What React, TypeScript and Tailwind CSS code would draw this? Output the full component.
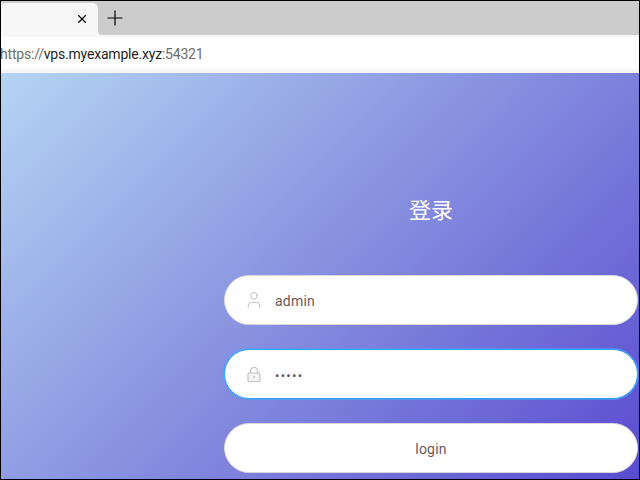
import { X, User } from 'lucide-react';

function Pill({ focused, children }: { focused?: boolean; children: React.ReactNode }) {
  return (
    <div
      className={`h-[50px] rounded-[25px] bg-white flex items-center border ${
        focused ? 'border-[#2f9fff] shadow-[0_0_0_1px_#40a9ff99]' : 'border-[#d9d9d9]'
      }`}
    >
      {children}
    </div>
  );
}

export default function App() {
  return (
    <div
      className="w-[640px] h-[480px] overflow-hidden border border-black flex flex-col"
      style={{ fontFamily: 'Roboto, "Noto Sans CJK SC", sans-serif' }}
    >
      {/* tab strip */}
      <div className="h-[36px] bg-[#f7f7f7] flex shrink-0">
        <div className="w-[97px] bg-[#cccccc] pt-[2px]">
          <div className="h-full bg-[#f7f7f7] rounded-tr-[5px] flex items-center justify-end pr-[9px] pb-[2px]">
            <X className="w-[14px] h-[14px] text-black" strokeWidth={2} />
          </div>
        </div>
        <div className="flex-1 h-[34px] bg-[#cccccc] rounded-bl-[4px] pl-[9px] pt-[9px]">
          <svg width="16" height="16" viewBox="0 0 16 16" className="text-black">
            <path d="M8 0.5V15.5M0.5 8H15.5" stroke="currentColor" strokeWidth="1.2" fill="none" />
          </svg>
        </div>
      </div>

      {/* address bar */}
      <div className="h-[32px] bg-white flex items-center shrink-0 text-[14px] tracking-[-0.2px] whitespace-nowrap pt-[2px]">
        <span className="text-[#6d6d6d] ml-[-1px]">https://</span>
        <span className="text-[#1f1f1f]">vps.myexample.xyz</span>
        <span className="text-[#6d6d6d]">:54321</span>
      </div>
      <div className="h-[4px] bg-[#f5f5f5] shrink-0" />

      {/* page */}
      <div className="flex-1 flex justify-end pr-[1px] bg-[linear-gradient(135deg,#b4d4f3_0%,#8e9ae2_42%,#5a4bd0_100%)]">
        <div className="w-[414px] pt-[122px] flex flex-col">
          <h1 className="h-[32px] text-center text-white text-[22px] leading-[32px] mb-[48px]">登录</h1>
          <div className="flex flex-col gap-[24px]">
            <Pill>
              <User className="w-[20px] h-[20px] ml-[19px] text-[#bfbfbf]" strokeWidth={1.2} />
              <span className="ml-[11px] pt-[2px] text-[14px] tracking-[0.2px] text-[#6a5a5c]">admin</span>
            </Pill>
            <Pill focused>
              <svg width="14" height="15" viewBox="0 0 14 15" className="ml-[22px] text-[#c4c4c4]" fill="none">
                <rect x="1" y="6" width="12" height="8.5" rx="1" stroke="currentColor" strokeWidth="1.2" fill="#f3f3f3" />
                <path d="M3.5 6V4a3.5 3.5 0 0 1 7 0v2" stroke="currentColor" strokeWidth="1.2" />
                <circle cx="7" cy="10.2" r="1" fill="currentColor" />
              </svg>
              <span className="ml-[14px] pt-[3px] text-[13px] text-[#5f5560] tracking-[1.3px]">•••••</span>
            </Pill>
            <Pill>
              <span className="w-full text-center pt-[2px] text-[14px] tracking-[0.2px] text-[#6a5a5c]">login</span>
            </Pill>
          </div>
        </div>
      </div>
    </div>
  );
}
